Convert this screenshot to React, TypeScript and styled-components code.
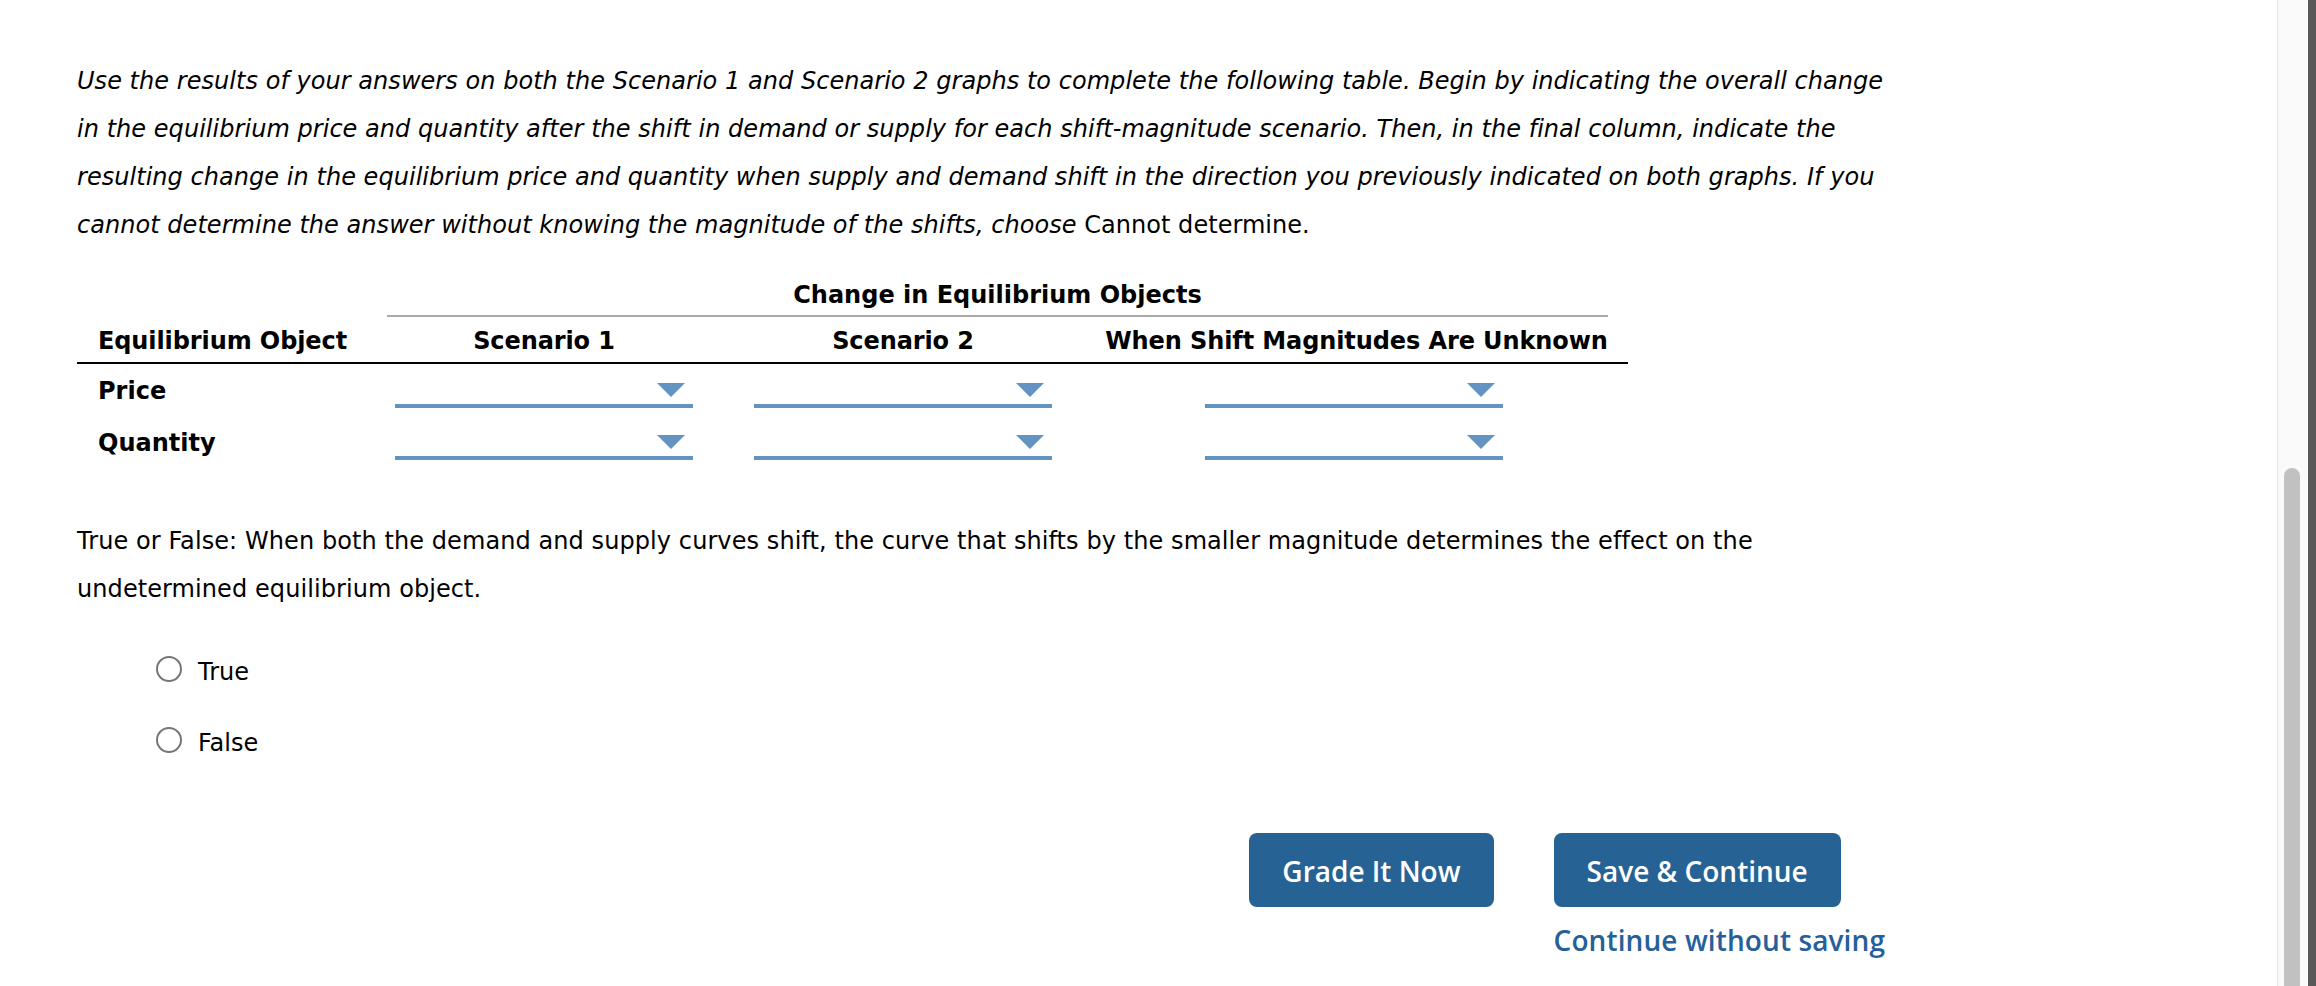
import React from "react";
import styled, { createGlobalStyle } from "styled-components";

const GlobalStyle = createGlobalStyle`
  html, body {
    margin: 0;
    padding: 0;
    background: #ffffff;
  }
  body {
    font-family: "DejaVu Sans", Verdana, sans-serif;
    color: #000000;
  }
`;

const Page = styled.div`
  display: flex;
  height: 986px;
  overflow: hidden;
  background: #ffffff;
`;

const Main = styled.main`
  flex: 1;
  padding: 57px 0 0 77px;
`;

const Content = styled.div`
  width: 1808px;
`;

const Instructions = styled.p`
  margin: 0;
  font-size: 24px;
  line-height: 48px;
  font-style: italic;
  letter-spacing: 0.04px;
  white-space: nowrap;
`;

const Upright = styled.span`
  font-style: normal;
`;

const Table = styled.div`
  margin-top: 31px;
  width: 1551px;
  display: grid;
  grid-template-columns: 310px 314px 404px 523px;
  font-size: 24px;
`;

const EmptyCell = styled.div``;

const SuperHeader = styled.div`
  grid-column: 2 / 5;
  margin-right: 20px;
  text-align: center;
  font-weight: bold;
  line-height: 30px;
  padding-bottom: 5px;
  border-bottom: 2px solid #aaaaaa;
`;

const HeaderCell = styled.div<{ $first?: boolean; $last?: boolean }>`
  font-weight: bold;
  line-height: 30px;
  padding: 9px ${(p) => (p.$last ? "20px" : "0")} 6px ${(p) => (p.$first ? "21px" : "0")};
  text-align: ${(p) => (p.$first ? "left" : "center")};
  border-bottom: 2px solid #000000;
  letter-spacing: -0.1px;
  white-space: nowrap;
`;

const LabelCell = styled.div`
  font-weight: bold;
  line-height: 30px;
  height: 52px;
  box-sizing: border-box;
  padding: 12px 0 0 21px;
`;

const SelectCell = styled.div<{ $last?: boolean }>`
  height: 52px;
  box-sizing: border-box;
  padding: 14px ${(p) => (p.$last ? "26px" : "0")} 0 0;
  display: flex;
  justify-content: center;
  align-items: flex-start;
`;

const Dropdown = styled.div`
  width: 298px;
  height: 30px;
  box-sizing: border-box;
  border-bottom: 4px solid #6393c2;
  display: flex;
  justify-content: flex-end;
  align-items: flex-start;
  padding: 5px 8px 0 0;
  cursor: pointer;
`;

const Caret = styled.span`
  width: 0;
  height: 0;
  border-left: 14px solid transparent;
  border-right: 14px solid transparent;
  border-top: 14px solid #6393c2;
`;

const Question = styled.p`
  margin: 49px 0 0;
  font-size: 24px;
  line-height: 48px;
  letter-spacing: 0.08px;
  white-space: nowrap;
`;

const Options = styled.div`
  margin: 35px 0 0 79px;
  display: flex;
  flex-direction: column;
  gap: 23px;
`;

const Option = styled.label`
  display: flex;
  align-items: flex-start;
  gap: 16px;
  height: 48px;
  font-size: 24px;
  line-height: 48px;
  cursor: pointer;
`;

const Radio = styled.span`
  margin-top: 8px;
  width: 26px;
  height: 26px;
  box-sizing: border-box;
  border: 2px solid #767676;
  border-radius: 50%;
  background: #ffffff;
`;

const Footer = styled.div`
  margin-top: 66px;
  display: flex;
  justify-content: flex-end;
  align-items: flex-start;
  gap: 60px;
`;

const ActionColumn = styled.div`
  display: flex;
  flex-direction: column;
  align-items: flex-start;
`;

const PrimaryButton = styled.button`
  height: 74px;
  padding: 0 33px;
  border: none;
  border-radius: 8px;
  background: #266294;
  color: #ffffff;
  font-family: "Open Sans", "Liberation Sans", sans-serif;
  font-weight: 600;
  font-size: 28px;
  padding-top: 2px;
  cursor: pointer;
`;

const TextLink = styled.a`
  margin-top: 14px;
  color: #26609a;
  font-family: "Open Sans", "Liberation Sans", sans-serif;
  font-weight: 600;
  font-size: 28px;
  letter-spacing: 0.1px;
  text-decoration: none;
  cursor: pointer;
`;

const Scrollbar = styled.div`
  width: 39px;
  display: flex;
  border-left: 1px solid #e4e4e4;
  box-sizing: border-box;
`;

const Track = styled.div`
  flex: 1;
  background: #fafafa;
  display: flex;
  padding: 468px 0 0 6px;
`;

const Thumb = styled.div`
  width: 16px;
  background: #c1c1c1;
  border-radius: 8px 8px 0 0;
`;

const EdgeStrip = styled.div`
  width: 8px;
  background: #585858;
`;

const columns = ["Scenario 1", "Scenario 2", "When Shift Magnitudes Are Unknown"];
const rows = ["Price", "Quantity"];

export default function App() {
  return (
    <>
      <GlobalStyle />
      <Page>
        <Main>
          <Content>
            <Instructions>
              Use the results of your answers on both the Scenario 1 and Scenario 2 graphs to complete the following table. Begin by indicating the overall change
              <br />
              in the equilibrium price and quantity after the shift in demand or supply for each shift-magnitude scenario. Then, in the final column, indicate the
              <br />
              resulting change in the equilibrium price and quantity when supply and demand shift in the direction you previously indicated on both graphs. If you
              <br />
              cannot determine the answer without knowing the magnitude of the shifts, choose <Upright>Cannot determine.</Upright>
            </Instructions>

            <Table>
              <EmptyCell />
              <SuperHeader>Change in Equilibrium Objects</SuperHeader>
              <HeaderCell $first>Equilibrium Object</HeaderCell>
              {columns.map((c, i) => (
                <HeaderCell key={c} $last={i === columns.length - 1}>
                  {c}
                </HeaderCell>
              ))}
              {rows.map((r) => (
                <React.Fragment key={r}>
                  <LabelCell>{r}</LabelCell>
                  {columns.map((c, i) => (
                    <SelectCell key={c} $last={i === columns.length - 1}>
                      <Dropdown>
                        <Caret />
                      </Dropdown>
                    </SelectCell>
                  ))}
                </React.Fragment>
              ))}
            </Table>

            <Question>
              True or False: When both the demand and supply curves shift, the curve that shifts by the smaller magnitude determines the effect on the
              <br />
              undetermined equilibrium object.
            </Question>

            <Options>
              <Option>
                <Radio />
                True
              </Option>
              <Option>
                <Radio />
                False
              </Option>
            </Options>

            <Footer>
              <PrimaryButton>Grade It Now</PrimaryButton>
              <ActionColumn>
                <PrimaryButton>Save &amp; Continue</PrimaryButton>
                <TextLink>Continue without saving</TextLink>
              </ActionColumn>
            </Footer>
          </Content>
        </Main>
        <Scrollbar>
          <Track>
            <Thumb />
          </Track>
          <EdgeStrip />
        </Scrollbar>
      </Page>
    </>
  );
}
